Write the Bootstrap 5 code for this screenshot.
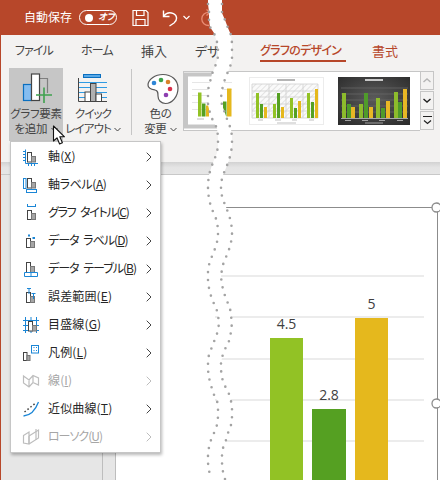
<!DOCTYPE html>
<html lang="ja">
<head>
<meta charset="utf-8">
<title>グラフ要素を追加</title>
<link href="https://cdn.jsdelivr.net/npm/bootstrap@5.3.0/dist/css/bootstrap.min.css" rel="stylesheet">
<style>
html,body{margin:0;width:440px;height:480px;overflow:hidden;background:#fff}
body{position:relative;font-family:"Noto Sans CJK JP","Noto Sans",sans-serif;font-size:12px;color:#444;font-feature-settings:"palt";line-height:1.2}
svg{display:block;flex:none}
.title-bar{height:35px;background:#b7472a;color:#fff;padding-left:24px}
.title-label{width:55px;font-size:12px}
.toggle-pill{width:38px;height:15px;border:1.5px solid #fff;border-radius:8px;padding-left:5px;margin-right:15px;gap:5px}
.toggle-dot{width:8px;height:8px;border-radius:50%;background:#fff}
.toggle-text{font-size:9px;font-weight:700;font-style:italic}
.window-body{border-left:1px solid #b7472a;background:#f3f2f1}
.tab-row{height:33px;padding-left:14px}
.tab-item{font-size:12px;color:#444;padding-top:8px;letter-spacing:-.9px}
.tab-kanji{font-size:13px;letter-spacing:0}
.w66{width:66px}.w60{width:60px}.w54{width:54px}.w65{width:65px}.w112{width:112px}
.tab-on{color:#b7472a;font-weight:500}
.tab-on span{display:inline-block;width:86px;height:19px;border-bottom:2px solid #b7472a;white-space:nowrap;letter-spacing:-.7px}
.tab-alt{color:#b7472a}
.ribbon-row{height:74px;padding-left:8px}
.rib-btn{height:73px;font-size:11.5px;line-height:15px;color:#444;padding-top:5px;text-align:center;letter-spacing:-.3px}
.rib-btn svg.big{margin:0 auto 1px}
.rib-on{width:54px;background:#c6c6c6}
.rib-two{width:60px;margin-right:8px}
.rib-two .rib-line{letter-spacing:-.9px}
.rib-three{width:49px;margin:0 -2px 0 4px}
.rib-sep{width:1px;height:66px;background:#c6c6c6;margin-top:1px}
.rib-line{white-space:nowrap}
.rib-line svg{display:inline-block;vertical-align:middle;margin-left:1px}
.gallery-box{width:237px;height:60px;margin-top:3px;background:#fff;border:1px solid #c6c6c6;border-width:1.5px 0 1.5px 1.5px}
.thumb-b{margin-left:17px;margin-top:5px}
.thumb-c{margin-left:14px;margin-top:5px}
.spin-col{width:14px;margin-top:3px;height:60px}
.spin-btn{height:19px;width:14px;border:1.5px solid #c6c6c6;background:#f3f2f1;margin-bottom:1px}
.gap-band{height:20px}
.shade-band{height:13px;background:linear-gradient(#d2d2d2,#e4e4e4 45%,#e6e6e6);border-bottom:1px solid #c8c8c8}
.work-area{height:305px}
.side-pane{width:102px;background:#e6e6e6;border-right:1px solid #bdbdbd}
.side-pane2{width:13px;background:#e6e6e6;border-right:1px solid #bdbdbd}
.chart-menu{--bs-dropdown-border-radius:0;--bs-dropdown-padding-y:1px;--bs-dropdown-border-color:#c6c6c6;top:141px;left:10px;width:151px;min-width:0;height:312px;box-shadow:1px 2px 3px rgba(0,0,0,.28);font-size:12px;z-index:20}
.chart-menu .dropdown-item{height:28px;padding:0 0 0 11px;font-size:12px;color:#262626;gap:8px}
.chart-menu .dropdown-item.disabled{color:#a6a6a6}
.chart-menu .item-text{flex:1;min-width:0;white-space:nowrap;letter-spacing:.15px;padding-bottom:2px}
.chart-menu .item-text.ls-a{letter-spacing:-1px}
.chart-menu .item-text.ls-b{letter-spacing:-1px;word-spacing:3px}
.chart-menu .item-text.ls-d{letter-spacing:-1.25px;word-spacing:3px}
.chart-menu .item-text.ls-c{letter-spacing:-.4px}
.chart-menu .item-arrow{margin-right:8px}
.tear-layer{position:absolute;left:0;top:0;z-index:30;pointer-events:none}
.pointer-mark{position:absolute;left:52px;top:125px;z-index:40}
</style>
</head>
<body>

<div class="title-bar d-flex align-items-center">
  <div class="title-label">自動保存</div>
  <div class="toggle-pill d-flex align-items-center">
    <div class="toggle-dot"></div><div class="toggle-text">オフ</div>
  </div>
  <svg width="17" height="18" viewBox="0 0 17 18" fill="none" stroke="#fff" stroke-width="1.2"><path d="M1 1.5H14L16 3.5V16.5H1Z"/><path d="M4.5 1.5V6.5H12V1.5M4 16.5V10.5H13V16.5"/></svg>
  <svg style="margin-left:13px" width="17" height="18" viewBox="0 0 17 18" fill="none" stroke="#fff" stroke-width="1.4"><path d="M1.5 1.5V7.5H7.5"/><path d="M1.8 7.2C4 4 8 3.2 11.5 4.6C15.5 6.5 15.5 11.5 12 14L7.5 17"/></svg>
  <svg style="margin-left:4px" width="7" height="5" viewBox="0 0 7 5" fill="none" stroke="#fff" stroke-width="1.2"><path d="M.5 1L3.5 4L6.5 1"/></svg>
  <svg style="margin-left:11px" width="12" height="18" viewBox="0 0 12 18" fill="none" stroke="#e88c74" stroke-width="1.3"><path d="M9 3.5C4 3 .8 6 .8 10C.8 14 4 16.5 8 16.5M5.5 .5L9 3.5L5.5 6.5"/></svg>
</div>

<div class="window-body">
  <div class="tab-row d-flex">
    <div class="tab-item w66">ファイル</div>
    <div class="tab-item w60">ホーム</div>
    <div class="tab-item tab-kanji w54">挿入</div>
    <div class="tab-item tab-kanji w65">デザ</div>
    <div class="tab-item tab-on w112"><span>グラフのデザイン</span></div>
    <div class="tab-item tab-kanji tab-alt">書式</div>
  </div>

  <div class="ribbon-row d-flex">
    <div class="rib-btn rib-on">
      <svg class="big" width="32" height="32" viewBox="0 0 32 32" style="margin-left:12px">
        <rect x="2.5" y="11.5" width="8" height="16" fill="#85bdf0" stroke="#0a6fc0" stroke-width="1.2"/>
        <path d="M19 5.5H26.5V20" fill="none" stroke="#7f7f7f" stroke-width="1.2"/>
        <rect x="10.5" y="1" width="8" height="26.5" fill="#fff" stroke="#444" stroke-width="1.2"/>
        <path d="M15 22H31M23 14.5V30" stroke="#3fa14f" stroke-width="1.6"/>
      </svg>
      <div class="rib-line">グラフ要素</div>
      <div class="rib-line">を追加 <svg width="7" height="5" viewBox="0 0 7 5" fill="none" stroke="#444"><path d="M.5 1L3.5 4L6.5 1"/></svg></div>
    </div>
    <div class="rib-btn rib-two">
      <svg class="big" width="30" height="32" viewBox="0 0 30 32" fill="none">
        <rect x="5.5" y="1.5" width="17" height="3" fill="#5aa9e6" stroke="#0a6fc0"/>
        <path d="M1 9.5H29M1 14.5H29M1 19.5H29M1 24.5H29" stroke="#2f9be3"/>
        <rect x="7" y="19" width="5.5" height="9.5" fill="#fff" stroke="#444"/>
        <rect x="12.5" y="10.5" width="5.5" height="18" fill="#b0b0b0" stroke="#444"/>
        <rect x="18" y="21" width="5.5" height="7.5" fill="#fff" stroke="#444"/>
        <path d="M.5 5V28.5H29" stroke="#444"/>
      </svg>
      <div class="rib-line">クイック</div>
      <div class="rib-line">レイアウト <svg width="7" height="5" viewBox="0 0 7 5" fill="none" stroke="#444"><path d="M.5 1L3.5 4L6.5 1"/></svg></div>
    </div>
    <div class="rib-sep"></div>
    <div class="rib-btn rib-three">
      <svg class="big" width="32" height="32" viewBox="0 0 32 32" style="margin-left:11px">
        <path d="M16 1.5C8 1.5 1 6.5 1 12C1 16 5 16.5 8 17C11 17.5 11 20 11 23C11 27 14 30.5 18.5 30.5C25 30.5 31 24 31 15C31 7 24.5 1.5 16 1.5Z" fill="#fff" stroke="#595959" stroke-width="1.2"/>
        <circle cx="7" cy="10" r="2.3" fill="#2e86d6"/><circle cx="14" cy="7" r="2.3" fill="#3ba24a"/><circle cx="21" cy="9" r="2.3" fill="#d9822b"/><circle cx="23" cy="16" r="2.3" fill="#d8304a"/><circle cx="19" cy="22" r="2.3" fill="#8d3fb0"/>
      </svg>
      <div class="rib-line">色の</div>
      <div class="rib-line">変更 <svg width="7" height="5" viewBox="0 0 7 5" fill="none" stroke="#444"><path d="M.5 1L3.5 4L6.5 1"/></svg></div>
    </div>

    <div class="gallery-box d-flex">
      <svg class="thumb-a" width="48" height="57" viewBox="184 72.5 48 57">
        <rect x="184" y="73" width="34" height="56" fill="#c6c6c6"/>
        <rect x="188" y="77" width="30" height="48" fill="#fff"/>
        <path d="M192 83H222M192 90H222M192 96H222M192 103H222M192 110H222M222 83H232M222 90H232" stroke="#e6e6e6"/>
        <rect x="198" y="93" width="3.5" height="24" fill="#92c225"/>
        <rect x="202" y="104" width="3.5" height="13" fill="#55a022"/>
        <rect x="206" y="106" width="3" height="11" fill="#e5b81d"/>
        <rect x="223" y="102" width="3.5" height="15" fill="#55a022"/>
        <rect x="227" y="89" width="4.5" height="28" fill="#e5b81d"/>
        <rect x="197" y="119" width="7" height="1" fill="#bbb"/>
      </svg>
      <svg class="thumb-b" width="75" height="48" viewBox="249 77 75 48">
        <defs><pattern id="hatch" width="4" height="4" patternUnits="userSpaceOnUse" patternTransform="rotate(45)"><rect width="4" height="4" fill="#fafafa"/><path d="M0 0V4" stroke="#d4d4d4" stroke-width="1.2"/></pattern></defs>
        <rect x="249" y="77" width="75" height="48" fill="#fff" stroke="#ececec" stroke-width="2"/>
        <rect x="252" y="84" width="66" height="34" fill="url(#hatch)"/>
        <path d="M252 84H318M252 91H318M252 97H318M252 104H318M252 111H318M252 118H318M252 84V118M269 84V118M286 84V118M303 84V118M318 84V118" stroke="#cfcfcf" stroke-width=".8"/>
        <rect x="277" y="79" width="18" height="2" fill="#b5b5b5"/>
        <g fill="#92c225"><rect x="256" y="93" width="3" height="25"/><rect x="273" y="104" width="3" height="14"/><rect x="290" y="98" width="3" height="20"/><rect x="307" y="93" width="3" height="25"/></g>
        <g fill="#55a022"><rect x="260" y="104" width="3" height="14"/><rect x="277" y="93" width="3" height="25"/><rect x="294" y="108" width="3" height="10"/><rect x="311" y="102" width="3" height="16"/></g>
        <g fill="#e5b81d"><rect x="264" y="107" width="3" height="11"/><rect x="281" y="107" width="3" height="11"/><rect x="298" y="101" width="3" height="17"/><rect x="315" y="89" width="3" height="29"/></g>
        <path d="M258 120H263M275 120H281M292 120H297M309 120H314M277 123H296" stroke="#c0c0c0"/>
      </svg>
      <svg class="thumb-c" width="72" height="48" viewBox="338 77 72 48">
        <defs><radialGradient id="dark" cx=".5" cy=".45" r=".7"><stop offset="0" stop-color="#5a5a5a"/><stop offset="1" stop-color="#2c2c2c"/></radialGradient></defs>
        <rect x="338" y="77" width="72" height="48" fill="url(#dark)"/>
        <path d="M341 88H408M341 94H408M341 100H408M341 106H408M341 112H408" stroke="#6b6b6b" stroke-width=".7"/>
        <rect x="365" y="79" width="18" height="2" fill="#c8c8c8"/>
        <g fill="#8dbb2c"><rect x="342" y="93" width="4" height="25"/><rect x="359" y="104" width="4" height="14"/><rect x="376" y="98" width="4" height="20"/><rect x="394" y="92" width="4" height="26"/></g>
        <g fill="#4f9b2a"><rect x="347" y="104" width="4" height="14"/><rect x="364" y="93" width="4" height="25"/><rect x="381" y="108" width="4" height="10"/><rect x="398" y="102" width="4" height="16"/></g>
        <g fill="#e8b725"><rect x="351" y="107" width="4" height="11"/><rect x="369" y="107" width="4" height="11"/><rect x="386" y="101" width="4" height="17"/><rect x="403" y="89" width="4" height="29"/></g>
        <path d="M341 118.5H408" stroke="#a8a8a8"/>
        <path d="M345 120.5H351M362 120.5H368M379 120.5H385M397 120.5H403M365 123H383" stroke="#a0a0a0"/>
      </svg>
    </div>
    <div class="spin-col">
      <div class="spin-btn d-flex align-items-center justify-content-center"><svg width="8" height="5" viewBox="0 0 8 5" fill="none" stroke="#b5b5b5" stroke-width="1.4"><path d="M.5 4L4 1L7.5 4"/></svg></div>
      <div class="spin-btn d-flex align-items-center justify-content-center"><svg width="8" height="5" viewBox="0 0 8 5" fill="none" stroke="#222" stroke-width="1.4"><path d="M.5 1L4 4L7.5 1"/></svg></div>
      <div class="spin-btn d-flex align-items-center justify-content-center"><svg width="9" height="9" viewBox="0 0 9 9" fill="none" stroke="#222" stroke-width="1.2"><path d="M0 .5H9M1 4.5L4.5 7.5L8 4.5"/></svg></div>
    </div>
  </div>

  <div class="gap-band"></div>
  <div class="shade-band"></div>

  <div class="work-area d-flex">
    <div class="side-pane"></div>
    <div class="side-pane2"></div>
    <svg width="324" height="305" viewBox="116 175 324 305" style="background:#fff">
      <path d="M215 276H424M215 317H424M215 359H424M215 400H424M215 441H424" stroke="#d9d9d9" stroke-width="1"/>
      <path d="M215 207.5H437.5V480" fill="none" stroke="#8c8c8c" stroke-width="1"/>
      <circle cx="436.5" cy="207.5" r="4.5" fill="#fff" stroke="#8c8c8c" stroke-width="1.3"/>
      <circle cx="436.5" cy="403.5" r="4.5" fill="#fff" stroke="#8c8c8c" stroke-width="1.3"/>
      <rect x="270" y="338" width="33" height="142" fill="#92c225"/>
      <rect x="312" y="409" width="34" height="71" fill="#55a022"/>
      <rect x="355" y="318" width="33" height="162" fill="#e5b81d"/>
      <g font-family="Open Sans, Noto Sans, sans-serif" font-size="14" fill="#404040" text-anchor="middle">
        <text x="286.5" y="329">4.5</text>
        <text x="329" y="400">2.8</text>
        <text x="371.5" y="309">5</text>
      </g>
    </svg>
  </div>
</div>

<!-- chart elements menu -->
<div class="dropdown-menu show chart-menu">
  <a class="dropdown-item d-flex align-items-center" href="#">
    <svg width="18" height="18" viewBox="0 0 18 18" fill="none"><path d="M3.5 1.5V15.5H16M1 3.5H3.5M1 6.5H3.5M1 9.5H3.5M1 12.5H3.5M6.5 15.5V18M9.5 15.5V18M12.5 15.5V18" stroke="#1b86d6"/><rect x="5.5" y="4.5" width="4" height="9.5" fill="#fff" stroke="#444"/><rect x="9.5" y="8.5" width="4" height="5.5" fill="#a6a6a6" stroke="#777"/></svg>
    <span class="item-text">軸(<u>X</u>)</span>
    <svg class="item-arrow" width="6" height="10" viewBox="0 0 6 10" fill="none" stroke="#444"><path d="M.7 .7L5 5L.7 9.3"/></svg>
  </a>
  <a class="dropdown-item d-flex align-items-center" href="#">
    <svg width="18" height="18" viewBox="0 0 18 18" fill="none"><rect x="1.5" y="2.5" width="2.5" height="10" fill="#fff" stroke="#1b86d6"/><rect x="4.5" y="13.5" width="10" height="3" fill="#fff" stroke="#1b86d6"/><rect x="5.5" y="2.5" width="4" height="9.5" fill="#fff" stroke="#444"/><rect x="9.5" y="6.5" width="4" height="5.5" fill="#a6a6a6" stroke="#777"/></svg>
    <span class="item-text ls-c">軸ラベル(<u>A</u>)</span>
    <svg class="item-arrow" width="6" height="10" viewBox="0 0 6 10" fill="none" stroke="#444"><path d="M.7 .7L5 5L.7 9.3"/></svg>
  </a>
  <a class="dropdown-item d-flex align-items-center" href="#">
    <svg width="18" height="18" viewBox="0 0 18 18" fill="none"><rect x="5.5" y="-.5" width="8" height="3" fill="#fff" stroke="#1b86d6"/><rect x="5.5" y="6.5" width="4" height="9" fill="#fff" stroke="#444"/><rect x="9.5" y="9.5" width="4" height="6" fill="#a6a6a6" stroke="#777"/></svg>
    <span class="item-text ls-d">グラフ タイトル(<u>C</u>)</span>
    <svg class="item-arrow" width="6" height="10" viewBox="0 0 6 10" fill="none" stroke="#444"><path d="M.7 .7L5 5L.7 9.3"/></svg>
  </a>
  <a class="dropdown-item d-flex align-items-center" href="#">
    <svg width="18" height="18" viewBox="0 0 18 18" fill="none"><rect x="6" y="2.5" width="2" height="2" fill="#1b86d6"/><rect x="10.5" y="5" width="2.5" height="2" fill="#1b86d6"/><rect x="4.5" y="6.5" width="4" height="9" fill="#fff" stroke="#444"/><rect x="8.5" y="9.5" width="4" height="6" fill="#a6a6a6" stroke="#777"/></svg>
    <span class="item-text ls-b">データ ラベル(<u>D</u>)</span>
    <svg class="item-arrow" width="6" height="10" viewBox="0 0 6 10" fill="none" stroke="#444"><path d="M.7 .7L5 5L.7 9.3"/></svg>
  </a>
  <a class="dropdown-item d-flex align-items-center" href="#">
    <svg width="18" height="18" viewBox="0 0 18 18" fill="none"><rect x="4.5" y="2.5" width="4" height="10" fill="#fff" stroke="#444"/><rect x="8.5" y="6.5" width="4" height="6" fill="#a6a6a6" stroke="#777"/><path d="M2.5 12.5H15.5V16.5H2.5ZM9 12.5V16.5" fill="#fff" stroke="#1b86d6"/></svg>
    <span class="item-text ls-b">データ テーブル(<u>B</u>)</span>
    <svg class="item-arrow" width="6" height="10" viewBox="0 0 6 10" fill="none" stroke="#444"><path d="M.7 .7L5 5L.7 9.3"/></svg>
  </a>
  <a class="dropdown-item d-flex align-items-center" href="#">
    <svg width="18" height="18" viewBox="0 0 18 18" fill="none"><rect x="4.5" y="4.5" width="4" height="10" fill="#fff" stroke="#444"/><rect x="8.5" y="8.5" width="4" height="6" fill="#a6a6a6" stroke="#777"/><path d="M5 .5H9M7 .5V6M9.5 5.5H13.5M11.5 5.5V11" stroke="#1b86d6"/></svg>
    <span class="item-text">誤差範囲(<u>E</u>)</span>
    <svg class="item-arrow" width="6" height="10" viewBox="0 0 6 10" fill="none" stroke="#444"><path d="M.7 .7L5 5L.7 9.3"/></svg>
  </a>
  <a class="dropdown-item d-flex align-items-center" href="#">
    <svg width="18" height="18" viewBox="0 0 18 18" fill="none"><path d="M1 4.5H17M1 14.5H17M3.5 1V17M9 1V17M14.5 1V17M1 9.5H17" stroke="#1b86d6"/><rect x="6.5" y="5.5" width="4" height="9.5" fill="#fff" stroke="#444"/><rect x="10.5" y="9.5" width="4" height="5.5" fill="#a6a6a6" stroke="#777"/></svg>
    <span class="item-text">目盛線(<u>G</u>)</span>
    <svg class="item-arrow" width="6" height="10" viewBox="0 0 6 10" fill="none" stroke="#444"><path d="M.7 .7L5 5L.7 9.3"/></svg>
  </a>
  <a class="dropdown-item d-flex align-items-center" href="#">
    <svg width="18" height="18" viewBox="0 0 18 18" fill="none"><rect x="1.5" y="8.5" width="3.5" height="8" fill="#fff" stroke="#444"/><rect x="5" y="11.5" width="3" height="5" fill="#a6a6a6" stroke="#777"/><rect x="9.5" y="1.5" width="7" height="7.5" fill="#fff" stroke="#1b86d6"/><path d="M11.5 3.5h1M11.5 6.5h1M14 3.5h1M14 6.5h1" stroke="#1b86d6"/></svg>
    <span class="item-text">凡例(<u>L</u>)</span>
    <svg class="item-arrow" width="6" height="10" viewBox="0 0 6 10" fill="none" stroke="#444"><path d="M.7 .7L5 5L.7 9.3"/></svg>
  </a>
  <a class="dropdown-item d-flex align-items-center disabled" href="#">
    <svg width="18" height="18" viewBox="0 0 18 18" fill="none" stroke="#bdbdbd" stroke-width="1.2"><path d="M1.5 4L7 8L11 3.5L16.5 6V13L11 10.5L7 15L1.5 11ZM7 8V15M11 3.5V10.5"/></svg>
    <span class="item-text">線(<u>I</u>)</span>
    <svg class="item-arrow" width="6" height="10" viewBox="0 0 6 10" fill="none" stroke="#bdbdbd"><path d="M.7 .7L5 5L.7 9.3"/></svg>
  </a>
  <a class="dropdown-item d-flex align-items-center" href="#">
    <svg width="18" height="18" viewBox="0 0 18 18" fill="none"><path d="M2.5 12L13 3.5" stroke="#444" stroke-width="1.5" stroke-dasharray="1.6 2.2"/><path d="M1.5 16C8 15.5 13.5 10 16.5 2" stroke="#1b86d6" stroke-width="1.3"/></svg>
    <span class="item-text">近似曲線(<u>T</u>)</span>
    <svg class="item-arrow" width="6" height="10" viewBox="0 0 6 10" fill="none" stroke="#444"><path d="M.7 .7L5 5L.7 9.3"/></svg>
  </a>
  <a class="dropdown-item d-flex align-items-center disabled" href="#">
    <svg width="18" height="18" viewBox="0 0 18 18" fill="none" stroke="#bdbdbd" stroke-width="1.2"><path d="M1.5 7.5L7 4V16L1.5 15ZM7 8L16.5 2V10L7 16"/><path d="M14 1V12M7 8V16" /></svg>
    <span class="item-text ls-a">ローソク(<u>U</u>)</span>
    <svg class="item-arrow" width="6" height="10" viewBox="0 0 6 10" fill="none" stroke="#bdbdbd"><path d="M.7 .7L5 5L.7 9.3"/></svg>
  </a>
</div>

<!-- torn-off strip across the whole picture -->
<svg class="tear-layer" width="440" height="480" viewBox="0 0 440 480" fill="none">
  <path fill="#fff" d="M208 0L208 4L209 12L209 20L210 27L214 33L217 42L218 50L218 57L215 67L212 74L210 82L208 90L208 98L208 105L210 113L213 121L217 128L218 137L218 145L217 153L214 160L211 168L209 175L208 183L208 191L209 199L211 207L214 214L217 221L218 230L218 238L216 246L213 254L210 261L208 269L208 277L208 284L210 292L212 300L216 307L218 315L219 323L218 331L215 339L212 347L209 354L208 362L208 370L209 378L211 385L213 393L217 400L218 408L218 417L217 425L214 433L211 440L209 447L208 455L208 463L209 471L212 478L213 480L226 480L225 479L223 472L222 463L222 455L223 448L226 440L228 433L231 425L232 417L232 409L231 401L229 394L225 386L222 378L221 370L221 362L223 354L226 347L230 339L231 331L232 323L231 316L230 308L227 301L224 293L222 285L221 277L222 269L224 261L228 253L230 246L232 238L232 230L231 222L229 215L226 207L223 200L221 192L221 183L223 175L226 168L229 160L231 153L232 145L232 137L231 129L228 122L225 113L222 105L221 98L222 90L224 82L227 74L230 67L232 60L232 50L232 43L231 35L228 28L225 20L222 13L222 4L222 0Z"/>
  <path stroke="#a3a3a3" stroke-width="2.6" stroke-linecap="round" stroke-dasharray="0 7.95" d="M208 4L209 12L209 20L210 27L214 33L217 42L218 50L218 57L215 67L212 74L210 82L208 90L208 98L208 105L210 113L213 121L217 128L218 137L218 145L217 153L214 160L211 168L209 175L208 183L208 191L209 199L211 207L214 214L217 221L218 230L218 238L216 246L213 254L210 261L208 269L208 277L208 284L210 292L212 300L216 307L218 315L219 323L218 331L215 339L212 347L209 354L208 362L208 370L209 378L211 385L213 393L217 400L218 408L218 417L217 425L214 433L211 440L209 447L208 455L208 463L209 471L212 478"/>
  <path stroke="#a3a3a3" stroke-width="2.6" stroke-linecap="round" stroke-dasharray="0 7.95" d="M222 4L222 13L225 20L228 28L231 35L232 43L232 50L232 60L230 67L227 74L224 82L222 90L221 98L222 105L225 113L228 122L231 129L232 137L232 145L231 153L229 160L226 168L223 175L221 183L221 192L223 200L226 207L229 215L231 222L232 230L232 238L230 246L228 253L224 261L222 269L221 277L222 285L224 293L227 301L230 308L231 316L232 323L231 331L230 339L226 347L223 354L221 362L221 370L222 378L225 386L229 394L231 401L232 409L232 417L231 425L228 433L226 440L223 448L222 455L222 463L223 472L225 479"/>
</svg>

<svg class="pointer-mark" width="14" height="21" viewBox="0 0 14 21"><path d="M1.5 1V16L5 12.8L7.6 19L10.4 17.8L7.8 11.8H12.5Z" fill="#fff" stroke="#111" stroke-width="1.1" stroke-linejoin="round"/></svg>

<script src="https://cdn.jsdelivr.net/npm/bootstrap@5.3.0/dist/js/bootstrap.bundle.min.js"></script>
</body>
</html>
